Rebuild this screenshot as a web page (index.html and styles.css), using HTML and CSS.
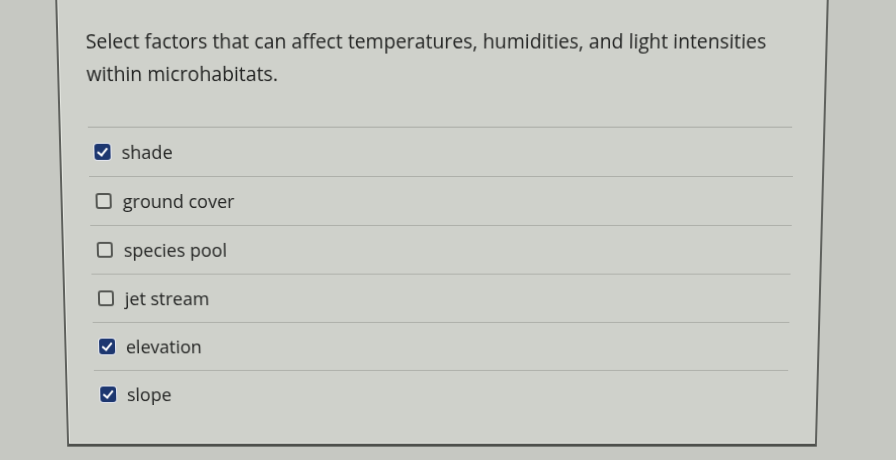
FILE: index.html
```html
<!DOCTYPE html>
<html lang="en">

<head>
	<meta charset="UTF-8">
	<title>Question</title>
	<link rel="stylesheet" href="styles.css">
</head>

<body>
	<div class="card">
		<p class="prompt">Select factors that can affect temperatures, humidities, and light intensities within microhabitats.</p>
		<ul class="choices">
			<li><label><span class="box checked"></span>shade</label></li>
			<li><label><span class="box"></span>ground cover</label></li>
			<li><label><span class="box"></span>species pool</label></li>
			<li><label><span class="box"></span>jet stream</label></li>
			<li><label><span class="box checked"></span>elevation</label></li>
			<li><label><span class="box checked"></span>slope</label></li>
		</ul>
	</div>
</body>

</html>
```

FILE: styles.css
```css
body {
	margin: 0;
	padding: 0;
	background-color: #c6c8c2;
	font-family: "Open Sans", "Liberation Sans", sans-serif;
	color: #232423;
	overflow: hidden;
}

/* screen is seen slightly from below, so the card narrows toward the bottom */
.card {
	width: 762px;
	height: 471px;
	margin: -20px 0 0 61px;
	box-sizing: border-box;
	padding: 47px 29px 0 27px;
	background-color: #cfd1cb;
	border: 2px solid #5f615d;
	border-top: none;
	border-bottom: 3px solid #4e504c;
	box-shadow: inset 0 -1px 0 #e4e6e0, inset 1px 0 0 #e4e6e0;
	outline: 1px solid transparent;
	transform: perspective(1000px) rotateX(-4deg);
}

.prompt {
	margin: 0;
	max-width: 700px;
	font-size: 19.3px;
	font-weight: 500;
	line-height: 32px;
	padding-bottom: 36px;
	border-bottom: 1px solid #a8aaa4;
}

.choices {
	list-style: none;
	margin: 0;
	padding: 0;
}

.choices li {
	height: 48px;
	border-bottom: 1px solid #aeb0aa;
	display: flex;
	align-items: center;
	padding-left: 6px;
}

.choices li:last-child {
	border-bottom: none;
}

.choices label {
	display: flex;
	align-items: center;
	gap: 11px;
	font-size: 18px;
	font-weight: 500;
}

.box {
	width: 16px;
	height: 16px;
	box-sizing: border-box;
	border: 2px solid #555753;
	border-radius: 3px;
	background-color: #d8dad4;
	position: relative;
}

.box.checked {
	background-color: #1d3770;
	border-color: #1d3770;
	box-shadow: 0 0 0 1px #e6e8f0;
}

.box.checked::after {
	content: "";
	position: absolute;
	left: 3px;
	top: 0px;
	width: 4px;
	height: 8px;
	border: solid #fff;
	border-width: 0 2px 2px 0;
	transform: rotate(40deg);
}
```
